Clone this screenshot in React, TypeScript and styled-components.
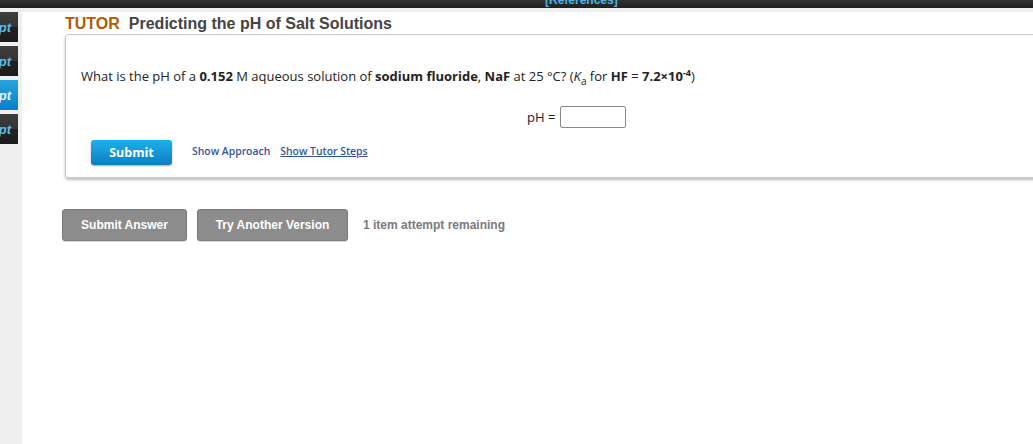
import React from "react";
import styled, { createGlobalStyle } from "styled-components";

const Global = createGlobalStyle`
  html, body { margin: 0; padding: 0; background: #fff; overflow: hidden; }
  body { width: 1033px; height: 444px; }
`;

const Page = styled.div`
  width: 1033px;
  height: 444px;
  display: flex;
  flex-direction: column;
  overflow: hidden;
`;

const TopBar = styled.div`
  height: 8px;
  flex: none;
  background: linear-gradient(#333, #1f1f1f);
  display: flex;
  justify-content: flex-start;
  overflow: hidden;
  padding-left: 545px;
`;

const RefLink = styled.span`
  font-family: "Liberation Sans", Arial, sans-serif;
  font-weight: bold;
  font-size: 12px;
  line-height: 12px;
  color: #4db3e6;
  margin-top: -6px;
`;

const Strip = styled.div`
  height: 4px;
  flex: none;
  background: #efefef;
`;

const Body = styled.div`
  flex: 1;
  display: flex;
  min-height: 0;
`;

const Sidebar = styled.div`
  width: 22px;
  flex: none;
  background: #efefef;
  display: flex;
  flex-direction: column;
  gap: 4px;
`;

const Tab = styled.div<{ $active?: boolean }>`
  width: 18px;
  height: 30px;
  display: flex;
  align-items: center;
  justify-content: flex-end;
  overflow: hidden;
  background: ${(p) =>
    p.$active
      ? "linear-gradient(#27a4e0, #0b80c4)"
      : "linear-gradient(#3e3e3e 0%, #333 50%, #222 51%, #1b1b1b 100%)"};
  font-family: "Liberation Sans", Arial, sans-serif;
  font-style: italic;
  font-weight: bold;
  font-size: 13px;
  color: ${(p) => (p.$active ? "#e6f6ff" : "#5cbde8")};
  padding-right: 7px;
  box-sizing: border-box;
  white-space: nowrap;
`;

const Main = styled.div`
  flex: 1;
  padding: 3px 0 0 40px;
  overflow: hidden;
`;

const Title = styled.h1`
  margin: 0 0 0 3px;
  font-family: "Liberation Sans", Arial, sans-serif;
  font-size: 16px;
  line-height: 18px;
  font-weight: bold;
  color: #444;
  white-space: nowrap;
`;

const Tutor = styled.span`
  color: #b35900;
  margin-right: 9px;
`;

const Card = styled.div`
  margin: 1px 0 0 3px;
  width: 1020px;
  height: 144px;
  box-sizing: border-box;
  border: 1px solid #c8c8c8;
  border-radius: 3px;
  box-shadow: 0 2px 3px rgba(0, 0, 0, 0.25);
  padding: 32px 0 0 15px;
  font-family: "Open Sans", "Noto Sans", sans-serif;
  font-size: 13px;
  color: #222;
`;

const Question = styled.p`
  margin: 0;
  line-height: 18px;
  white-space: nowrap;
`;

const AnswerRow = styled.div`
  margin-top: 21px;
  display: flex;
  align-items: center;
  padding-left: 446px;
  gap: 5px;
  line-height: 18px;
`;

const Input = styled.div`
  width: 64px;
  height: 20px;
  border: 1px solid #888;
  border-radius: 2px;
  background: #fff;
`;

const Actions = styled.div`
  margin-top: 12px;
  margin-left: 10px;
  display: flex;
  align-items: center;
`;

const SubmitBtn = styled.div`
  width: 81px;
  height: 25px;
  border-radius: 3px;
  background: linear-gradient(#1db0ec, #0d7dc0);
  box-shadow: 0 1px 2px rgba(0, 0, 0, 0.35);
  color: #fff;
  font-weight: bold;
  font-size: 12.5px;
  display: flex;
  align-items: center;
  justify-content: center;
  margin-right: 20px;
`;

const TextLink = styled.span<{ $underline?: boolean }>`
  color: #34559a;
  font-size: 10.4px;
  font-weight: 600;
  text-decoration: ${(p) => (p.$underline ? "underline" : "none")};
  margin-right: 10px;
  margin-top: -3px;
`;

const Footer = styled.div`
  margin-top: 31px;
  display: flex;
  align-items: center;
  gap: 10px;
  font-family: "Liberation Sans", Arial, sans-serif;
  font-size: 12px;
  font-weight: bold;
`;

const GrayBtn = styled.div<{ $w: number }>`
  width: ${(p) => p.$w}px;
  height: 32px;
  box-sizing: border-box;
  border: 1px solid #7a7a7a;
  border-radius: 3px;
  background: #8c8c8c;
  color: #fff;
  display: flex;
  align-items: center;
  justify-content: center;
  box-shadow: 0 1px 1px rgba(0, 0, 0, 0.15);
`;

const Remaining = styled.span`
  color: #7a7a7a;
  margin-left: 5px;
`;

export default function App() {
  return (
    <Page>
      <Global />
      <TopBar>
        <RefLink>[References]</RefLink>
      </TopBar>
      <Strip />
      <Body>
        <Sidebar>
          <Tab>1 pt</Tab>
          <Tab>1 pt</Tab>
          <Tab $active>1 pt</Tab>
          <Tab>1 pt</Tab>
        </Sidebar>
        <Main>
          <Title>
            <Tutor>TUTOR</Tutor>Predicting the pH of Salt Solutions
          </Title>
          <Card>
            <Question>
              What is the pH of a <b>0.152</b> M aqueous solution of{" "}
              <b>sodium fluoride</b>, <b>NaF</b> at 25 °C? (<i>K</i>
              <sub style={{ fontSize: "10px", lineHeight: 0 }}>a</sub> for <b>HF</b> ={" "}
              <b>
                7.2×10<sup style={{ fontSize: "9px", lineHeight: 0 }}>-4</sup>
              </b>
              )
            </Question>
            <AnswerRow>
              <span>pH =</span>
              <Input />
            </AnswerRow>
            <Actions>
              <SubmitBtn>Submit</SubmitBtn>
              <TextLink>Show Approach</TextLink>
              <TextLink $underline>Show Tutor Steps</TextLink>
            </Actions>
          </Card>
          <Footer>
            <GrayBtn $w={125}>Submit Answer</GrayBtn>
            <GrayBtn $w={151}>Try Another Version</GrayBtn>
            <Remaining>1 item attempt remaining</Remaining>
          </Footer>
        </Main>
      </Body>
    </Page>
  );
}
